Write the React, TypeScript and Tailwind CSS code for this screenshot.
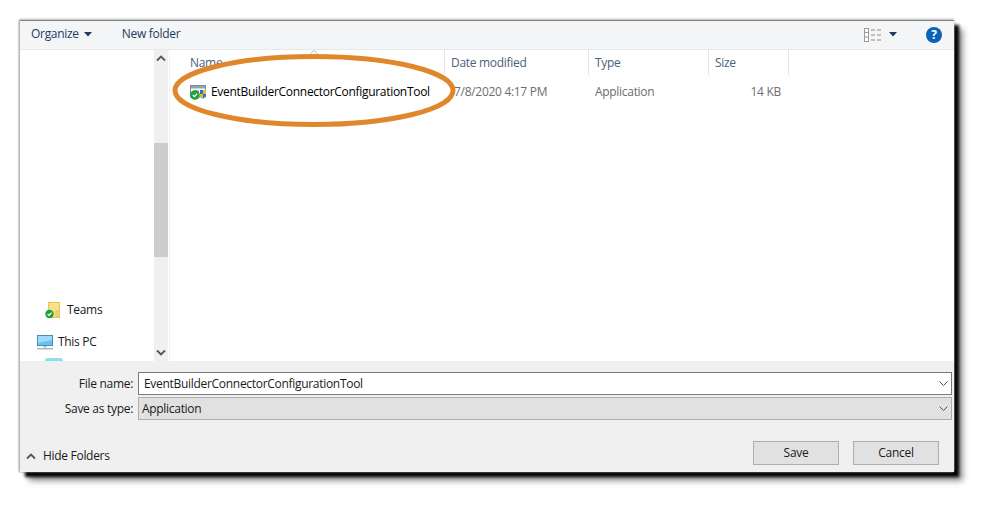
const font = { fontFamily: '"Open Sans", "Noto Sans", sans-serif', letterSpacing: "-0.3px" };

function Caret({ color = "#1f3a5f" }: { color?: string }) {
  return (
    <svg width="8" height="5" viewBox="0 0 8 5" className="block">
      <path d="M0 0h8L4 4.5z" fill={color} />
    </svg>
  );
}

function Chevron({ dir }: { dir: "up" | "down" }) {
  return (
    <svg width="10" height="7" viewBox="0 0 10 7" className="block">
      <path d={dir === "up" ? "M1 5.5 5 1.5l4 4" : "M1 1.5l4 4 4-4"} fill="none" stroke="#555" strokeWidth="1.8" />
    </svg>
  );
}

function ThinChevron() {
  return (
    <svg width="9" height="5" viewBox="0 0 9 5" className="block">
      <path d="M.5.5l4 4 4-4" fill="none" stroke="#555" strokeWidth="1" />
    </svg>
  );
}

function ViewsIcon() {
  return (
    <svg width="17" height="14" viewBox="0 0 17 14" className="block">
      <rect x=".5" y=".5" width="4" height="13" fill="#fff" stroke="#9a9a9a" />
      <path d="M.5 4.5h4M.5 9h4" stroke="#9a9a9a" />
      <path d="M7 2h4M13 2h4M7 7h4M13 7h4M7 12h4M13 12h4" stroke="#8a8a8a" />
    </svg>
  );
}

function HelpIcon() {
  return (
    <div className="flex h-4 w-4 items-center justify-center rounded-full bg-[#0a63b8] text-[12px] font-bold leading-none text-white">
      ?
    </div>
  );
}

function AppIcon() {
  return (
    <svg width="16" height="15" viewBox="0 0 16 15" className="block">
      <rect x=".5" y=".5" width="15" height="11.5" fill="#fff" stroke="#7d8a94" />
      <rect x="1" y="1" width="14" height="2.5" fill="#8fa6b8" />
      <rect x="3" y="5" width="6" height="2" fill="#a9c4dc" />
      <path d="M10 5h6v5l-3 4-3-4z" fill="#2a6fc0" />
      <path d="M13 5h3v4h-3zM10 9h3v5l-3-4z" fill="#f2b632" />
      <circle cx="5" cy="10" r="4.8" fill="#22a33a" />
      <path d="M2.8 10l1.6 1.6 2.8-3" fill="none" stroke="#fff" strokeWidth="1.3" />
    </svg>
  );
}

function TeamsIcon() {
  return (
    <svg width="16" height="17" viewBox="0 0 16 17" className="block">
      <rect x="3.5" y=".5" width="11" height="15" fill="#fbe08a" stroke="#e6c25a" />
      <rect x="11" y="9" width="3.5" height="6.5" fill="#f6d26a" stroke="#e6c25a" />
      <circle cx="4.5" cy="12" r="4.2" fill="#1f9e3a" />
      <path d="M2.6 12l1.5 1.5 2.5-2.8" fill="none" stroke="#fff" strokeWidth="1.2" />
    </svg>
  );
}

function PcIcon() {
  return (
    <svg width="16" height="15" viewBox="0 0 16 15" className="block">
      <rect x=".5" y=".5" width="15" height="10" fill="#63c3f5" stroke="#4d8db5" />
      <path d="M1 1h14v4L1 8z" fill="#9bdcfb" />
      <rect x="6.5" y="11" width="3" height="1.5" fill="#9fb2c0" />
      <rect x="0" y="13" width="16" height="1.5" fill="#a9b9c5" />
    </svg>
  );
}

export default function App() {
  return (
    <div className="h-[508px] w-[990px] overflow-hidden bg-white pl-5 pt-5" style={font}>
      <div className="relative flex h-[452px] w-[934px] flex-col border-t border-t-[#808080] bg-white text-[12px] shadow-[0_-1px_2px_#c8c8c8,-1px_0_2px_#8a8a8a,5px_5px_3px_#000,9px_9px_6px_#999]">
        <div className="flex h-[29px] shrink-0 items-center border-b border-[#e6e7e9] bg-[#f4f5f7] pb-[1px] text-[#1e3a5f]">
          <span className="mb-[2px] ml-[11px]">Organize</span>
          <span className="ml-[5px]"><Caret /></span>
          <span className="mb-[2px] ml-[30px]">New folder</span>
          <span className="ml-auto"><ViewsIcon /></span>
          <span className="ml-[8px]"><Caret /></span>
          <span className="ml-[29px] mr-[12px]"><HelpIcon /></span>
        </div>

        <div className="flex min-h-0 flex-1">
          <div className="flex w-[134px] shrink-0 flex-col justify-end overflow-hidden text-[#1a1a1a]">
            <div className="ml-[25px] flex h-[32px] items-center gap-[6px]">
              <TeamsIcon /><span>Teams</span>
            </div>
            <div className="ml-[17px] flex h-[32px] items-center gap-[5px]">
              <PcIcon /><span>This PC</span>
            </div>
            <div className="ml-[25px] h-[3px] w-[18px] rounded-t-full bg-[#8fdcf2]" />
          </div>
          <div className="flex w-[14px] shrink-0 flex-col items-center justify-between bg-[#f0f0f0] py-[5px]">
            <Chevron dir="up" />
            <div className="mb-[85px] mt-[73px] h-[114px] w-full bg-[#cdcdcd]" />
            <Chevron dir="down" />
          </div>
          <div className="ml-[1px] w-[1px] shrink-0 bg-[#f2f2f2]" />

          <div className="relative min-w-0 flex-1 bg-white text-[#6d6d6d]">
            <div className="absolute left-[140px] top-0">
              <svg width="8" height="4" viewBox="0 0 8 4" className="block">
                <path d="M.5 3.5 4 .5l3.5 3" fill="none" stroke="#b5b5b5" />
              </svg>
            </div>
            <div className="flex h-[25px] text-[#4c607a]">
              <div className="flex w-[275px] items-center border-r border-[#e5e5e5] pl-[20px]">Name</div>
              <div className="flex w-[144px] items-center border-r border-[#e5e5e5] pl-[6px]">Date modified</div>
              <div className="flex w-[120px] items-center border-r border-[#e5e5e5] pl-[6px]">Type</div>
              <div className="flex w-[80px] items-center border-r border-[#e5e5e5] pl-[6px]">Size</div>
            </div>
            <div className="mt-[7px] flex h-[20px] items-center">
              <div className="flex w-[275px] items-center gap-[5px] pl-[20px] text-black">
                <AppIcon />
                <span>EventBuilderConnectorConfigurationTool</span>
              </div>
              <div className="w-[144px] pl-[9px]">7/8/2020 4:17 PM</div>
              <div className="w-[120px] pl-[6px]">Application</div>
              <div className="w-[72px] text-right">14 KB</div>
            </div>
          </div>
        </div>

        <div className="flex h-[111px] shrink-0 flex-col bg-[#f0f0f0] text-[#1a1a1a]">
          <div className="mt-[11px] flex h-[23px] items-center">
            <span className="w-[113px] text-right">File name:</span>
            <div className="ml-[5px] mr-[2px] flex h-[23px] flex-1 items-center justify-between border border-[#7a7a7a] bg-white pl-[5px] pr-[3px]">
              <span>EventBuilderConnectorConfigurationTool</span>
              <ThinChevron />
            </div>
          </div>
          <div className="mt-[2px] flex h-[23px] items-center">
            <span className="w-[113px] text-right">Save as type:</span>
            <div className="ml-[5px] mr-[2px] flex h-[23px] flex-1 items-center justify-between border border-[#adadad] bg-[#e1e1e1] pl-[3px] pr-[3px]">
              <span>Application</span>
              <ThinChevron />
            </div>
          </div>
          <div className="mt-[21px] flex items-center">
            <span className="ml-[6px] mt-[6px]"><Chevron dir="up" /></span>
            <span className="ml-[7px] mt-[6px]">Hide Folders</span>
            <button className="ml-auto h-[24px] w-[86px] border border-[#adadad] bg-[#e1e1e1]">Save</button>
            <button className="ml-[14px] mr-[15px] h-[24px] w-[86px] border border-[#adadad] bg-[#e1e1e1]">Cancel</button>
          </div>
        </div>

        <svg width="290" height="80" viewBox="0 0 290 80" className="pointer-events-none absolute left-[151px] top-[30px]">
          <ellipse cx="143" cy="39.5" rx="139" ry="34" fill="none" stroke="#e0872b" strokeWidth="5" />
        </svg>
      </div>
    </div>
  );
}
